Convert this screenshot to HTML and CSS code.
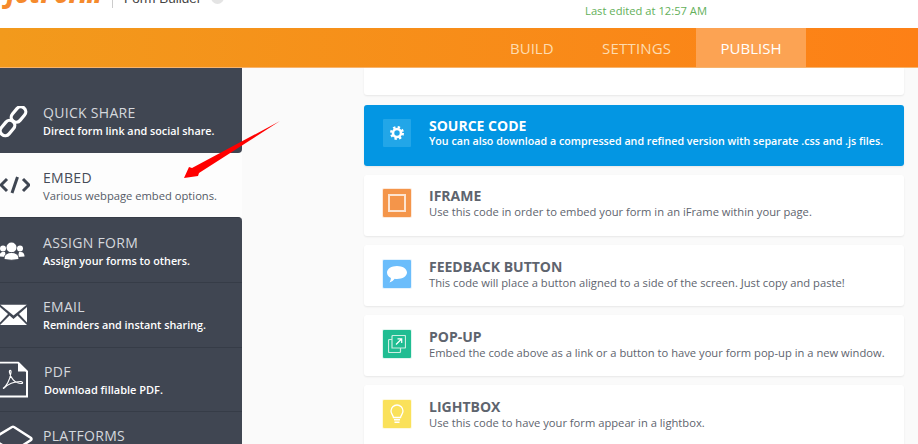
FILE: index.html
```html
<!DOCTYPE html>
<html lang="en">
  <head>
    <meta charset="utf-8">
    <title>Form Builder - Publish</title>
    <link rel="stylesheet" href="styles.css">
  </head>
  <body>
    <header class="top">
      <div class="brand">
        <span class="logo">JotForm</span>
        <span class="brand-sep"></span>
        <span class="brand-name">Form Builder</span>
        <span class="brand-chip"></span>
      </div>
      <div class="edited">Last edited at 12:57 AM</div>
    </header>
    <nav class="tabs">
      <a class="tab tab-build">BUILD</a>
      <a class="tab tab-settings">SETTINGS</a>
      <a class="tab tab-publish">PUBLISH</a>
    </nav>
    <div class="body">
      <aside class="side">
        <div class="item item-first">
          <svg class="item-icon" width="30" height="32" viewBox="0 0 30 32"><g fill="none" stroke="#fff" stroke-width="3.2"><rect x="13.500" y="0" width="10" height="17" rx="5" transform="rotate(40 18.500 8.500)"/><rect x="2.500" y="13.500" width="10" height="17" rx="5" transform="rotate(40 7.500 22)"/></g></svg>
          <div class="item-text">
            <div class="item-title">QUICK SHARE</div>
            <div class="item-desc">Direct form link and social share.</div>
          </div>
        </div>
        <div class="item item-active">
          <svg class="item-icon" width="30" height="18" viewBox="0 0 30 18"><path d="M7 3 1 9l6 6M23 3l6 6-6 6M17.500 1 12 17" fill="none" stroke="#3f4652" stroke-width="3"/></svg>
          <div class="item-text">
            <div class="item-title">EMBED</div>
            <div class="item-desc">Various webpage embed options.</div>
          </div>
        </div>
        <div class="item item-assign">
          <svg class="item-icon" width="26" height="19" viewBox="0 0 26 19"><g fill="#fff" transform="translate(-1.500 0)"><circle cx="4.500" cy="7" r="3"/><circle cx="21.500" cy="7" r="3"/><path d="M1 15c0-3 1.500-4.500 3.500-4.500h2l1 5zM26 15c0-3-1.500-4.500-3.500-4.500h-2l-1 5z"/><circle cx="13" cy="6" r="5"/><path d="M5.500 18c0-4.500 2.500-7 7.500-7s7.500 2.500 7.500 7q-7.500 1.500-15 0z" stroke="#404652"/></g></svg>
          <div class="item-text">
            <div class="item-title">ASSIGN FORM</div>
            <div class="item-desc">Assign your forms to others.</div>
          </div>
        </div>
        <div class="item item-email">
          <svg class="item-icon" width="28" height="21" viewBox="0 0 28 21"><g fill="#fff"><path d="M0 0h27L13.500 11z"/><path d="M0 2.500 8 9.500 0 18z"/><path d="M27 2.500 19 9.500 27 18z"/><path d="M0 20.500 9.500 11l4 3.500 4-3.500 9.500 9.500z"/></g></svg>
          <div class="item-text">
            <div class="item-title">EMAIL</div>
            <div class="item-desc">Reminders and instant sharing.</div>
          </div>
        </div>
        <div class="item item-pdf">
          <svg class="item-icon" width="28" height="37" viewBox="0 0 28 37"><path d="M0 1h18l9 9v25H0" fill="none" stroke="#fff" stroke-width="2"/><path d="M18 1v9h9z" fill="#fff"/><path d="M3 27c3-2 7-8 8-16 .4-3-2-3-1.500 0 1 5 5 11 12 11 2 0 1-2-1-2-6 0-12 2-17 7" fill="none" stroke="#fff" stroke-width="1.200"/></svg>
          <div class="item-text">
            <div class="item-title">PDF</div>
            <div class="item-desc">Download fillable PDF.</div>
          </div>
        </div>
        <div class="item item-platforms">
          <svg class="item-icon" width="34" height="32" viewBox="0 0 34 32"><path d="M-6 13 12 2q1-.5 2 0l17 11q1 1 0 2L14 26q-1 .5-2 0L-6 15z" fill="none" stroke="#fff" stroke-width="2.500"/></svg>
          <div class="item-text">
            <div class="item-title">PLATFORMS</div>
          </div>
        </div>
      </aside>
      <main class="main">
        <div class="card card-stub"></div>
        <div class="card card-on">
          <div class="badge badge-blue">
            <svg width="14" height="14" viewBox="0 0 14 14"><circle cx="7" cy="7" r="4" fill="none" stroke="#fff" stroke-width="2.600"/><circle cx="7" cy="7" r="5.800" fill="none" stroke="#fff" stroke-width="2.400" stroke-dasharray="2.300 2.255"/></svg>
          </div>
          <div class="card-text">
            <div class="card-title">SOURCE CODE</div>
            <div class="card-desc">You can also download a compressed and refined version with separate .css and .js files.</div>
          </div>
        </div>
        <div class="card">
          <div class="badge badge-orange"><span class="frame"></span></div>
          <div class="card-text">
            <div class="card-title">IFRAME</div>
            <div class="card-desc">Use this code in order to embed your form in an iFrame within your page.</div>
          </div>
        </div>
        <div class="card card-low">
          <div class="badge badge-sky">
            <svg width="20" height="17" viewBox="0 0 20 17"><path d="M10 0c5.500 0 10 2.800 10 6.500S15.500 13 10 13q-1.200 0-2.300-.2Q6 15.500 2.500 16.500q1.500-2 1.400-4.500C1.500 11 0 8.900 0 6.500 0 2.800 4.500 0 10 0z" fill="#fff"/></svg>
          </div>
          <div class="card-text">
            <div class="card-title">FEEDBACK BUTTON</div>
            <div class="card-desc">This code will place a button aligned to a side of the screen. Just copy and paste!</div>
          </div>
        </div>
        <div class="card card-low">
          <div class="badge badge-green">
            <svg width="18" height="18" viewBox="0 0 18 18"><g fill="none" stroke="#cdeee2" stroke-width="1.200"><path d="M4 13V1.500a1 1 0 0 1 1-1h11.500a1 1 0 0 1 1 1V12a1 1 0 0 1-1 1z"/><path d="M4 4.500H1.500a1 1 0 0 0-1 1v11a1 1 0 0 0 1 1h10a1 1 0 0 0 1-1V13"/><path d="M8 9.500l5.500-5.500M9.500 3.800h4.200V8" stroke="#fff"/></g></svg>
          </div>
          <div class="card-text">
            <div class="card-title">POP-UP</div>
            <div class="card-desc">Embed the code above as a link or a button to have your form pop-up in a new window.</div>
          </div>
        </div>
        <div class="card card-low">
          <div class="badge badge-yellow">
            <svg width="14" height="20" viewBox="0 0 14 20"><path d="M7 1a6 6 0 0 0-6 6c0 2.500 2 4 2.500 6.500h7C11 11 13 9.500 13 7a6 6 0 0 0-6-6z" fill="none" stroke="#fff" stroke-width="1.300"/><path d="M4 15h6v1.500H4zM4.500 17.500h5V19h-5z" fill="#fff"/></svg>
          </div>
          <div class="card-text">
            <div class="card-title">LIGHTBOX</div>
            <div class="card-desc">Use this code to have your form appear in a lightbox.</div>
          </div>
        </div>
      </main>
    </div>
    <svg class="arrow" width="100" height="62" viewBox="0 0 100 62"><path d="M96 0 15 52l-1 3L0 57l5-11 3 1z" fill="#f00"/></svg>
  </body>
</html>
```

FILE: styles.css
```css
html, body {
  margin: 0;
  height: 444px;
  overflow: hidden;
}
body {
  position: relative;
  font-family: "Open Sans", sans-serif;
  background-color: #fafafa;
}

.top {
  height: 28px;
  background-color: #fff;
  overflow: hidden;
  display: flex;
  justify-content: space-between;
}
.brand {
  display: flex;
  align-items: flex-end;
  height: 8px;
}
.logo {
  width: 106px;
  box-sizing: border-box;
  padding-left: 6px;
  font-weight: 800;
  font-style: italic;
  font-size: 24px;
  line-height: 24px;
  color: #f58a2d;
  margin-bottom: 2px;
}
.brand-sep {
  width: 1px;
  height: 9px;
  background-color: #ccc;
  margin-left: 6px;
}
.brand-name {
  font-family: "Liberation Sans", sans-serif;
  font-size: 13.500px;
  line-height: 14px;
  color: #444;
  margin: 0 0 2px 11px;
}
.brand-chip {
  width: 13px;
  height: 13px;
  border-radius: 50%;
  background-color: #e4e4e4;
  margin: 0 0 4px 10px;
}
.edited {
  font-size: 11.200px;
  line-height: 15px;
  color: #63b05a;
  margin: 3px 211px 0 0;
}

.tabs {
  height: 40px;
  box-sizing: border-box;
  border-bottom: 1px solid #f7b46e;
  background: linear-gradient(to right, #f29a1c, #fd8016);
  display: flex;
  padding-left: 696px;
  position: relative;
}
.tab {
  font-size: 15px;
  line-height: 40px;
  color: #fddcb0;
}
.tab-build {
  position: absolute;
  left: 510px;
}
.tab-settings {
  position: absolute;
  left: 602px;
  letter-spacing: .2px;
}
.tab-publish {
  width: 110px;
  text-align: center;
  background-color: #fca353;
  color: #fff;
}

.body {
  display: flex;
}
.side {
  width: 242px;
  flex-shrink: 0;
  height: 376px;
  overflow: hidden;
}
.item {
  height: 65px;
  box-sizing: border-box;
  background-color: #404652;
  border-bottom: 1px solid #363c47;
  display: flex;
  align-items: center;
  position: relative;
  padding-left: 43px;
  color: #fff;
}
.item-first {
  height: 85px;
  padding-top: 20px;
  border-bottom: 0;
  border-radius: 0 0 4px 0;
}
.item-active {
  height: 64px;
  background-color: #fdfdfd;
  color: #3f4652;
  border-bottom: 0;
}
.item-assign {
  height: 66px;
  border-top: 1px solid #363c47;
  border-radius: 0 4px 0 0;
}
.item-pdf {
  height: 64px;
  padding-left: 44px;
}
.item-platforms {
  border-bottom: 0;
}
.item-icon {
  position: absolute;
  left: 0;
  top: 50%;
  transform: translateY(-50%);
}
.item-first .item-icon {
  top: 54px;
}
.item-assign .item-icon {
  top: 52%;
}
.item-platforms .item-icon {
  top: 29px;
}
.item-text {
  padding-top: 2px;
}
.item-active .item-text,
.item-assign .item-text {
  padding-top: 4px;
}
.item-title {
  font-size: 14px;
  line-height: 18px;
  letter-spacing: .3px;
  color: #d5d8dd;
}
.item-active .item-title {
  color: #454b57;
}
.item-desc {
  font-size: 10.800px;
  line-height: 18px;
  font-weight: 600;
}
.item-pdf .item-desc {
  font-size: 11px;
}
.item-active .item-desc {
  font-size: 11.200px;
  font-weight: 400;
  color: #555b66;
}
.item-platforms .item-text {
  align-self: flex-start;
  padding-top: 15px;
}

.main {
  width: 540px;
  margin-left: 122px;
  display: flex;
  flex-direction: column;
  gap: 9px;
}
.card {
  height: 61px;
  flex-shrink: 0;
  box-sizing: border-box;
  background-color: #fff;
  border-radius: 3px;
  box-shadow: 0 1px 2px rgba(0, 0, 0, .08);
  display: flex;
  align-items: center;
  padding: 0 0 5px 19px;
  color: #5e646e;
}
.card-low {
  padding-bottom: 3px;
}
.card-stub {
  height: 27px;
  margin-bottom: 1px;
  border-radius: 0 0 3px 3px;
}
.card-on {
  background-color: #0396e3;
  color: #fff;
}
.badge {
  width: 28px;
  height: 28px;
  flex-shrink: 0;
  border-radius: 1px;
  display: flex;
  align-items: center;
  justify-content: center;
}
.badge-blue {
  background-color: #22a6e8;
}
.badge-orange {
  background-color: #f4954a;
  box-shadow: 0 0 0 1px #fde9da;
}
.badge-sky {
  background-color: #6bbdfb;
  box-shadow: 0 0 0 1px #e4f3fe;
}
.badge-green {
  background-color: #20bd92;
  box-shadow: 0 0 0 1px #dff6ef;
}
.badge-yellow {
  background-color: #fae15a;
  box-shadow: 0 0 0 1px #fef9de;
}
.frame {
  width: 14px;
  height: 14px;
  border: 2px solid #fde3cf;
}
.card-text {
  margin-left: 18px;
}
.card-title {
  font-size: 14px;
  line-height: 17px;
  font-weight: 700;
}
.card-desc {
  font-size: 11.200px;
  line-height: 15px;
}
.card-on .card-desc {
  font-size: 10.700px;
  font-weight: 600;
}

.arrow {
  position: absolute;
  left: 184px;
  top: 121px;
}
```
